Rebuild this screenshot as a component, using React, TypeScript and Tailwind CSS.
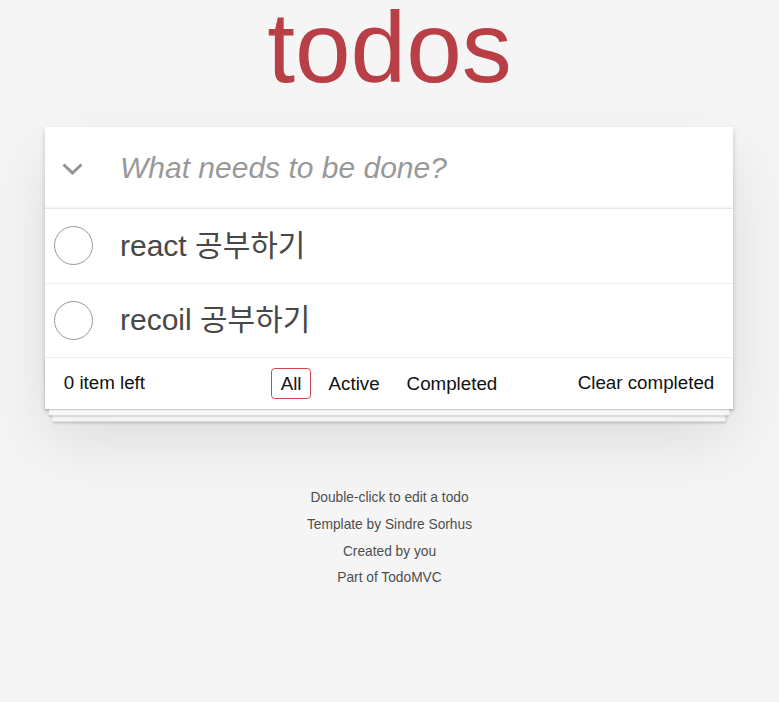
import React from "react";

const todos = [
  { id: 1, title: "react 공부하기" },
  { id: 2, title: "recoil 공부하기" },
];

const filters = ["All", "Active", "Completed"];

const stackShadow =
  "shadow-[0_1.25px_1.25px_rgba(0,0,0,0.2),0_10px_0_-3.75px_#f6f6f6,0_11.25px_1.25px_-3.75px_rgba(0,0,0,0.2),0_20px_0_-7.5px_#f6f6f6,0_21.25px_2.5px_-7.5px_rgba(0,0,0,0.2)]";

function ToggleAll() {
  return (
    <svg width="21" height="12" viewBox="0 0 21 12" fill="none" aria-hidden="true" className="ml-[17px] mt-[3px]">
      <polyline points="1.5,1.5 10.5,10 19.5,1.5" stroke="#949494" strokeWidth="3" />
    </svg>
  );
}

export default function App() {
  return (
    <div className="flex min-h-screen flex-col bg-[#f5f5f5] font-['Liberation_Sans','Noto_Sans_CJK_KR',Arial,sans-serif] text-[#111] leading-[24.5px]">
      <h1 className="-mt-[9px] text-center text-[100px] font-extralight leading-[112px] text-[#b83f45]">todos</h1>

      <section className="ml-[45px] mt-[24px] w-[688px] bg-white shadow-[0_2.5px_5px_0_rgba(0,0,0,0.2),0_31px_62px_0_rgba(0,0,0,0.1)]">
        <header className="flex h-[82px] items-center border-b border-[#e6e6e6] shadow-[inset_0_-2px_1px_rgba(0,0,0,0.03)]">
          <div className="w-[75px] shrink-0">
            <ToggleAll />
          </div>
          <input
            className="w-full bg-transparent pr-[20px] text-[30px] leading-[42px] text-[#111] outline-none placeholder:italic placeholder:text-[#999]"
            placeholder="What needs to be done?"
          />
        </header>

        <ul>
          {todos.map((t) => (
            <li key={t.id} className="flex h-[74.5px] items-center border-b border-[#ededed]">
              <div className="w-[75px] shrink-0">
                <div className="ml-[9px] h-[39px] w-[39px] rounded-full border border-[#9a9a9a]" />
              </div>
              <label className="text-[30px] leading-[36px] text-[#484848]">{t.title}</label>
            </li>
          ))}
        </ul>

        <footer className={`grid h-[51px] grid-cols-[1fr_auto_1fr] items-center px-[18.75px] text-[18.75px] ${stackShadow}`}>
          <span className="text-left">0 item left</span>
          <ul className="flex">
            {filters.map((f) => (
              <li key={f}>
                <a
                  className={`mx-[3.75px] inline-block rounded-[3.75px] border px-[8.75px] py-[3.75px] leading-[21px] ${
                    f === "All" ? "border-[#ce4646]" : "border-transparent"
                  }`}
                >
                  {f}
                </a>
              </li>
            ))}
          </ul>
          <button className="justify-self-end">Clear completed</button>
        </footer>
      </section>

      <footer className="mt-[82px] flex flex-col items-center gap-[13px] text-[13.75px] leading-[13.75px] text-[#4d4d4d] [text-shadow:0_1px_0_rgba(255,255,255,0.5)]">
        <p>Double-click to edit a todo</p>
        <p>Template by Sindre Sorhus</p>
        <p>Created by you</p>
        <p>Part of TodoMVC</p>
      </footer>
    </div>
  );
}
